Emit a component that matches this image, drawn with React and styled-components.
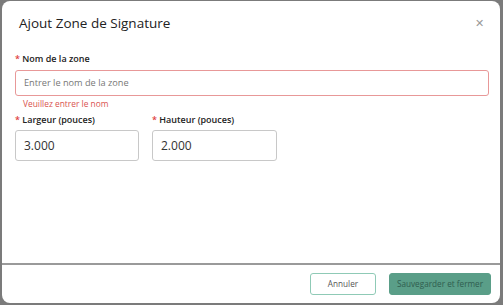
import styled, { createGlobalStyle } from 'styled-components';

const GlobalStyle = createGlobalStyle`
  html, body {
    margin: 0;
    padding: 0;
    background: #7b7b7b;
    font-family: "Open Sans", "Noto Sans", sans-serif;
  }
`

const Backdrop = styled.div`
  width: 503px;
  height: 305px;
  padding: 1px 3px 2px 2px;
  box-sizing: border-box;
  display: flex;
`

const Modal = styled.div`
  flex: 1;
  background: #fff;
  border-radius: 8px;
  display: flex;
  flex-direction: column;
  overflow: hidden;
`

const Header = styled.div`
  display: flex;
  align-items: center;
  justify-content: space-between;
  padding: 7px 16px 0 17px;
  height: 30px;
`

const Title = styled.h2`
  margin: 0;
  font-size: 13.5px;
  font-weight: 500;
  color: #222;
`

const Close = styled.button`
  border: none;
  background: none;
  color: #999;
  font-size: 11px;
  padding: 0;
  cursor: pointer;
`

const Body = styled.div`
  flex: 1;
  padding: 15px 11px 0 13px;
`

const Label = styled.label`
  display: block;
  font-size: 9px;
  font-weight: 600;
  color: #222;
  margin-bottom: 4px;
  line-height: 12px;

  &::before {
    content: '* ';
    color: #e04040;
  }
`

const Input = styled.input`
  box-sizing: border-box;
  width: ${p => p.$width || '100%'};
  height: ${p => p.$height || '26px'};
  border: 1px solid ${p => (p.$error ? '#e89898' : '#c8c8c8')};
  border-radius: 3px;
  padding: 0 8px;
  font-family: inherit;
  font-size: ${p => (p.$big ? '12px' : '9.2px')};
  color: #333;
  outline: none;

  &::placeholder {
    color: #777;
  }
`

const Error = styled.div`
  font-size: 8.4px;
  color: #d9534f;
  padding-left: 8px;
  margin-top: 2px;
  line-height: 12px;
`

const Row = styled.div`
  display: flex;
  gap: 13px;
  margin-top: 4px;
`

const Field = styled.div`
  display: flex;
  flex-direction: column;
`

const Footer = styled.div`
  border-top: 2px solid #9a9a9a;
  height: 37px;
  display: flex;
  align-items: center;
  justify-content: flex-end;
  gap: 13px;
  padding: 0 9px 1px 0;
`

const Button = styled.button`
  height: 22px;
  border-radius: 3px;
  font-family: inherit;
  font-size: 8.2px;
  white-space: nowrap;
  padding: 0;
  border: 1px solid ${p => (p.$primary ? '#5a9e88' : '#8fcab6')};
  background: ${p => (p.$primary ? '#5a9e88' : '#fff')};
  color: ${p => (p.$primary ? '#2f5d4f' : '#555')};
  width: ${p => (p.$primary ? '102px' : '66px')};
  cursor: pointer;
`

const App = () => {
  return (
    <>
      <GlobalStyle />
      <Backdrop>
        <Modal>
          <Header>
            <Title>Ajout Zone de Signature</Title>
            <Close>✕</Close>
          </Header>
          <Body>
            <Label>Nom de la zone</Label>
            <Input $error placeholder="Entrer le nom de la zone" />
            <Error>Veuillez entrer le nom</Error>
            <Row>
              <Field>
                <Label>Largeur (pouces)</Label>
                <Input $big $width="124px" $height="31px" defaultValue="3.000" />
              </Field>
              <Field>
                <Label>Hauteur (pouces)</Label>
                <Input $big $width="125px" $height="31px" defaultValue="2.000" />
              </Field>
            </Row>
          </Body>
          <Footer>
            <Button>Annuler</Button>
            <Button $primary>Sauvegarder et fermer</Button>
          </Footer>
        </Modal>
      </Backdrop>
    </>
  );
};

export default App;
